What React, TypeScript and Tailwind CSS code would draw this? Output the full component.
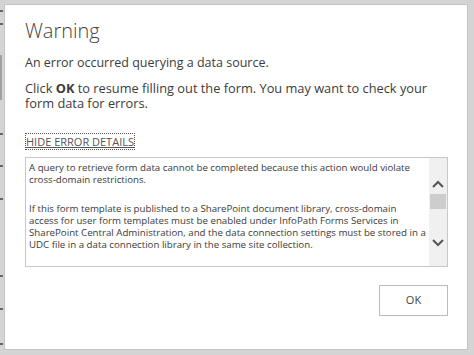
export default function App() {
  const font = { fontFamily: '"Open Sans", "Noto Sans", Arial, sans-serif' };
  return (
    <div className="w-[474px] h-[355px] bg-[#d4d4d4] flex overflow-hidden" style={font}>
      {/* sheet behind the dialog */}
      <div className="w-[4px] h-full flex flex-col">
        <div className="mt-[10px] h-[2px] w-[3px] bg-[#666]" />
        <div className="mt-[11px] h-[2px] w-[3px] bg-[#666]" />
        <div className="mt-[30px] h-[45px] w-[2px] bg-[#a0a0a0]" />
        <div className="mt-[33px] h-[2px] w-[3px] bg-[#666]" />
        <div className="mt-[30px] h-[2px] w-[3px] bg-[#666]" />
        <div className="mt-[31px] h-[2px] w-[3px] bg-[#666]" />
        <div className="mt-[75px] h-[2px] w-[3px] bg-[#666]" />
        <div className="mt-[31px] h-[2px] w-[3px] bg-[#666]" />
        <div className="mt-[33px] h-[2px] w-[3px] bg-[#666]" />
      </div>
      <div className="flex-1 mt-[4px] mb-[5px] mr-[6px] bg-white border border-[#c4c4c4] pl-[20px] pr-[19px] flex flex-col text-[#444]">
        <h1 className="text-[20px] font-light leading-none mt-[16px] text-[#444]">Warning</h1>
        <p className="text-[12.5px] mt-[14px] leading-[16px] text-[#3c3c3c]">
          An error occurred querying a data source.
        </p>
        <p className="text-[12.8px] mt-[10px] leading-[15px] text-[#3c3c3c]">
          Click <span className="font-bold">OK</span> to resume filling out the form. You may want to check your
          form data for errors.
        </p>
        <div className="mt-[17px]">
          <span className="text-[11px] underline border border-dotted border-[#555] leading-[11px] text-[#555]">
            HIDE ERROR DETAILS
          </span>
        </div>
        <div className="mt-[5px] h-[110px] border border-[#c8c8c8] flex">
          <div className="flex-1 pl-[3px] pt-[4px] text-[9.7px] leading-[12px] text-[#3a3a3a] whitespace-nowrap">
            <p>
              A query to retrieve form data cannot be completed because this action would violate
              <br />
              cross-domain restrictions.
            </p>
            <p className="mt-[17px]">
              If this form template is published to a SharePoint document library, cross-domain
              <br />
              access for user form templates must be enabled under InfoPath Forms Services in
              <br />
              SharePoint Central Administration, and the data connection settings must be stored in a
              <br />
              UDC file in a data connection library in the same site collection.
            </p>
          </div>
          <div className="w-[18px] bg-[#f0f0f0] flex flex-col items-center">
            <svg width="12" height="8" viewBox="0 0 12 8" className="mt-[22px]">
              <path d="M1 7 L6 2 L11 7" fill="none" stroke="#555" strokeWidth="2" />
            </svg>
            <div className="w-[16px] h-[15px] bg-[#cdcdcd] mt-[6px]" />
            <div className="flex-1" />
            <svg width="12" height="8" viewBox="0 0 12 8" className="mb-[19px]">
              <path d="M1 1 L6 6 L11 1" fill="none" stroke="#555" strokeWidth="2" />
            </svg>
          </div>
        </div>
        <div className="flex justify-end mt-[18px]">
          <button className="w-[69px] h-[31px] border border-[#bbb] bg-white text-[11px] text-[#444]">OK</button>
        </div>
      </div>
    </div>
  );
}
